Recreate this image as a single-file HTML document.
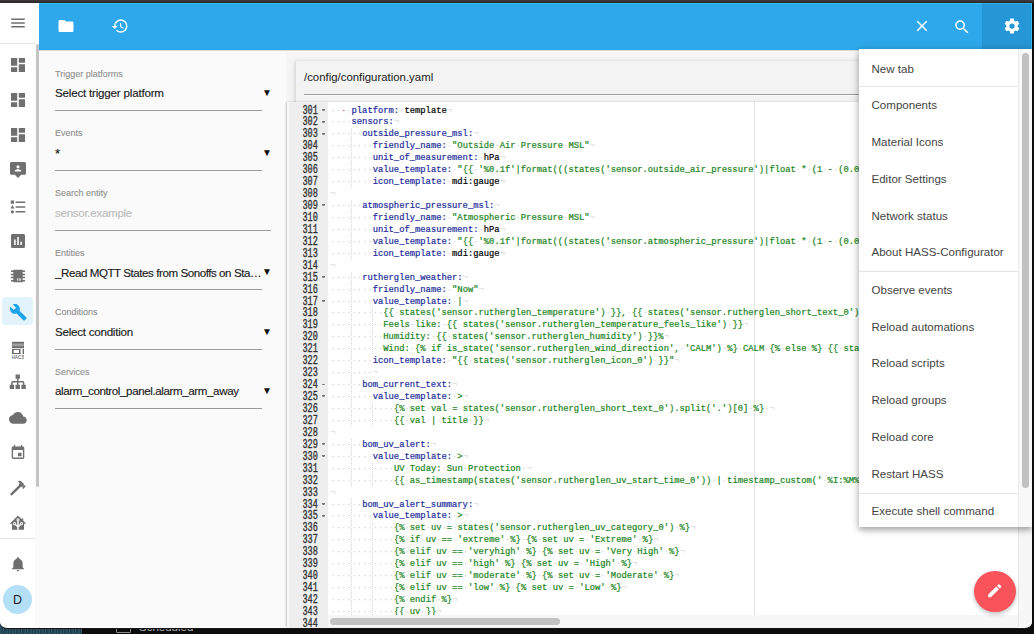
<!DOCTYPE html>
<html><head><meta charset="utf-8">
<style>
*{box-sizing:border-box;margin:0;padding:0}
html,body{width:1034px;height:634px;overflow:hidden;background:#0c0c0c;font-family:"Liberation Sans",sans-serif}
.abs{position:absolute}
#topstrip{position:absolute;left:0;top:0;width:1034px;height:3px;background:linear-gradient(#383c41,#3a2d2b 70%,#1e2226)}
#wall{position:absolute;left:0;top:618px;width:82px;height:16px;background:repeating-linear-gradient(90deg,#2a4d5e 0 2px,#1d3a49 2px 3px,#335868 3px 4px,#22404f 4px 6px)}
#sched{position:absolute;left:115.5px;top:621px;width:15px;height:12px;border:1px solid #8a8a8a;border-radius:1px}
#schedt{position:absolute;left:139px;top:620.5px;font-size:11.5px;color:#b0b0b0;white-space:nowrap}
#win{position:absolute;left:0;top:3px;width:1032px;height:625px;background:#fff;border-radius:0 0 7px 7px;overflow:hidden;box-shadow:0 1px 0 #161616}
#side{position:absolute;left:0;top:0;width:35px;height:624px;background:#fff}
#side svg{position:absolute;width:14px;height:14px;fill:#6f6f6f}
#sidesep{position:absolute;left:0;top:40px;width:35px;height:1px;background:#e3e3e3}
#sidesep2{position:absolute;left:0;top:535px;width:35px;height:1px;background:#e3e3e3}
#sscroll{position:absolute;left:35px;top:40px;width:4.5px;height:585px;background:#fbfbfb;border-right:1px solid #e2e2e2}
#sthumb{position:absolute;left:35.5px;top:41px;width:3.5px;height:443px;background:#c4c4c4;border-radius:2px}
#sel{position:absolute;left:2px;top:294px;width:31px;height:28px;background:#e3f3fc;border-radius:4px}
#avatar{position:absolute;left:3px;top:582px;width:29px;height:29px;border-radius:50%;background:#b3e0f7;color:#222;font-size:12.5px;text-align:center;line-height:30px}
#hdr{position:absolute;left:39px;top:0;width:993px;height:47px;background:#2ea8eb;border-top:1px solid #2cc4f8;border-bottom:1px solid #1eaaf6}
#hdrline{position:absolute;left:39px;top:47px;width:993px;height:1px;background:#e8d4c8}
#gearbg{position:absolute;left:982px;top:0;width:50px;height:47px;background:#2596d6;border-top:1px solid #2bb0ee;border-right:1px solid #35b5f0}
#hdr svg,#gearbg svg{position:absolute;width:18px;height:18px;fill:#fff}
#panel{position:absolute;left:39px;top:47px;width:247px;height:577px;background:#fafafa}
#main{position:absolute;left:286px;top:47px;width:746px;height:577px;background:#f6f6f6}
.lbl{position:absolute;left:16px;margin-top:-0.5px;font-size:9px;color:#8f8f8f;white-space:nowrap;-webkit-text-stroke:0.1px currentColor}
.selt{position:absolute;left:16px;margin-top:0.2px;font-size:11.6px;color:#1a1a1a;-webkit-text-stroke:0.15px currentColor;white-space:nowrap}
.uline{position:absolute;left:16px;height:1px;background:#9a9a9a}
.arr{position:absolute;left:223px;font-size:10px;color:#111}
#pathcard{position:absolute;left:296px;top:58px;width:736px;height:46px;background:#f3f3f3;box-shadow:-1px 0 3px rgba(0,0,0,.13),-4px 0 8px rgba(0,0,0,.04)}
#pathtxt{position:absolute;left:8px;top:10px;font-size:11.4px;color:#1a1a1a;white-space:nowrap}
#pathline{position:absolute;left:8px;top:33px;width:730px;height:2px;background:linear-gradient(#9b9b9b 0 50%,#fcfcfc 50% 100%)}
#editor{position:absolute;left:287px;top:99px;width:731px;height:525px;background:#fff;box-shadow:-1px 0 2px rgba(0,0,0,.2);overflow:hidden}
#gutter{position:absolute;left:0;top:0;width:41px;height:525px;background:linear-gradient(90deg,#f6f6f6 0 2px,#eeeeee 2px)}
#htrack{position:absolute;left:41px;top:513px;width:700px;height:12px;background:#f6f6f6}
.gn{position:absolute;left:0;width:31px;-webkit-text-stroke:0.25px #333;height:12px;text-align:right;font-family:"Liberation Mono",monospace;font-size:8.82px;line-height:12px;color:#333}
.gn span{display:inline-block;transform:translateY(1.4px) scale(0.97,1.36);transform-origin:100% 80%}
.fw{position:absolute;left:34.5px;top:4.4px;width:3.2px;height:1.8px;background:#777;border-radius:0 0 2px 2px}
#code{position:absolute;left:43.35px;top:0;width:700px;height:513px}
.ln{position:absolute;left:0;white-space:pre;-webkit-text-stroke:0.2px currentColor;font-family:"Liberation Mono",monospace;font-size:8.82px;line-height:12px;height:12px;color:#000}
.ln i{font-style:normal;color:#d0d0d0;-webkit-text-stroke:0}
.k{color:#1c2c9a}
.s{color:#1a8520}
.s i{color:#d0d0d0}
.v{color:#000}
.ls{color:#e2607a;-webkit-text-stroke:0}
u{position:absolute;width:1px;height:12px;background:repeating-linear-gradient(to bottom,#d8d8d8 0 1px,transparent 1px 2px)}
#pmargin{position:absolute;left:423.7px;top:0;width:1px;height:513px;background:#e3e3e3}
#hscroll{position:absolute;left:43px;top:516px;width:230px;height:7px;background:#c2c2c2;border-radius:4px}
#belowed{position:absolute;left:287px;top:612px;width:731px;height:12px;background:#f7f7f7}
#rstrip{position:absolute;left:1018px;top:47px;width:14px;height:577px;background:#f7f7f7;border-left:1px solid #e8e8e8}
#menu{position:absolute;left:859px;top:46px;width:173px;height:478px;background:#fff;box-shadow:0 3px 6px rgba(0,0,0,.3),0 1px 10px rgba(0,0,0,.12)}
.mi{position:absolute;left:12.5px;font-size:11.55px;color:#444;white-space:nowrap}
.msep{position:absolute;left:0;width:159px;height:1px;background:#e4e4e4}
#mtrack{position:absolute;left:159px;top:0;width:14px;height:478px;background:#f8f8f8;border-left:1px solid #ececec}
#mthumb{position:absolute;left:163px;top:4px;width:7px;height:435px;background:#c1c1c1;border-radius:3.5px}
#fab{position:absolute;left:974px;top:568px;width:41.5px;height:41px;border-radius:50%;background:#f8525a;box-shadow:0 2px 4px rgba(0,0,0,.25)}
#fab svg{position:absolute;left:12px;top:10.8px;width:17.5px;height:17.5px;fill:#fff}
</style></head><body>
<div id="topstrip"></div>
<div id="wall"></div>
<div id="sched"></div>
<div id="schedt">Scheduled</div>
<div id="win">
  <div id="side">
    <svg style="left:9px;top:10.5px;width:18px;height:18px" viewBox="0 0 24 24"><path d="M3,6H21V8H3V6M3,11H21V13H3V11M3,16H21V18H3V16Z"/></svg>
    <div id="sidesep"></div>
    <svg style="left:11px;top:55px;width:14px;height:14px" viewBox="3 3 18 18"><path d="M13,3V9H21V3M13,21H21V11H13M3,21H11V15H3M3,13H11V3H3V13Z"/></svg>
    <svg style="left:11px;top:90px" viewBox="3 3 18 18"><path d="M13,3V9H21V3M13,21H21V11H13M3,21H11V15H3M3,13H11V3H3V13Z"/></svg>
    <svg style="left:11px;top:125px" viewBox="3 3 18 18"><path d="M13,3V9H21V3M13,21H21V11H13M3,21H11V15H3M3,13H11V3H3V13Z"/></svg>
    <svg style="left:10px;top:159px;width:16px;height:16px" viewBox="2 2 20 20"><path d="M2,4C2,2.89 2.9,2 4,2H20A2,2 0 0,1 22,4V16A2,2 0 0,1 20,18H16L12,22L8,18H4A2,2 0 0,1 2,16V4M16,14V13C16,11.67 13.33,11 12,11C10.67,11 8,11.67 8,13V14H16M12,6A2,2 0 0,0 10,8A2,2 0 0,0 12,10A2,2 0 0,0 14,8A2,2 0 0,0 12,6Z"/></svg>
    <svg style="left:10px;top:196px;width:16px;height:16px" viewBox="2 2 20 20"><path d="M5,9.5L7.5,14H2.5L5,9.5M3,4H7V8H3V4M5,20A2,2 0 0,0 7,18A2,2 0 0,0 5,16A2,2 0 0,0 3,18A2,2 0 0,0 5,20M9,5V7H21V5H9M9,19H21V17H9V19M9,13H21V11H9V13Z"/></svg>
    <svg style="left:11px;top:231px" viewBox="3 3 18 18"><path d="M19,3H5C3.89,3 3,3.89 3,5V19A2,2 0 0,0 5,21H19A2,2 0 0,0 21,19V5C21,3.89 20.1,3 19,3M9,17H7V10H9V17M13,17H11V7H13V17M17,17H15V13H17V17Z"/></svg>
    <svg style="left:11px;top:266px" viewBox="3 3 18 18"><path d="M6,4H18V5H21V7H18V9H21V11H18V13H21V15H18V17H21V19H18V20H6V19H3V17H6V15H3V13H6V11H3V9H6V7H3V5H6V4M11,15V18H12V15H11M13,15V18H14V15H13M15,15V18H16V15H15Z"/></svg>
    <div id="sel"></div>
    <svg style="left:9.5px;top:300.5px;width:17px;height:17px;fill:#1ea4ea" viewBox="1 1 22.5 22.5"><path d="M22.7,19L13.6,9.9C14.5,7.6 14,4.9 12.1,3C10.1,1 7.1,0.6 4.7,1.7L9,6L6,9L1.6,4.7C0.4,7.1 0.9,10.1 2.9,12.1C4.8,14 7.5,14.5 9.8,13.6L18.9,22.7C19.3,23.1 19.9,23.1 20.3,22.7L22.6,20.4C23.1,20 23.1,19.3 22.7,19Z"/></svg>
    <svg style="left:12px;top:338px;width:12px;height:18px" viewBox="0 0 12 18"><rect x="0" y="0.8" width="12" height="6.4" fill="#6a6a6a"/><rect x="0.3" y="2.4" width="11.4" height="3" fill="#a0a0a0"/><rect x="0" y="8" width="1.6" height="5" fill="#6a6a6a"/><rect x="0" y="8" width="8.5" height="0.9" fill="#6a6a6a"/><rect x="0" y="12" width="8.5" height="1" fill="#6a6a6a"/><rect x="7" y="8" width="1.5" height="5" fill="#6a6a6a"/><rect x="10.6" y="8" width="1.4" height="5" fill="#6a6a6a"/><text x="6" y="17.6" font-size="4.6" text-anchor="middle" font-family="Liberation Sans" font-weight="bold" fill="#7a7a7a">HACS</text></svg>
    <svg style="left:9px;top:370.1px;width:17.5px;height:17.5px" viewBox="0 0 24 24"><path d="M9,2V8H11V11H5C3.89,11 3,11.89 3,13V16H1V22H7V16H5V13H11V16H9V22H15V16H13V13H19V16H17V22H23V16H21V13C21,11.89 20.11,11 19,11H13V8H15V2H9Z"/></svg>
    <svg style="left:9.3px;top:405.6px;width:17.7px;height:17.7px" viewBox="0 0 24 24"><path d="M19.35,10.03C18.67,6.59 15.64,4 12,4C9.11,4 6.6,5.64 5.35,8.03C2.34,8.36 0,10.9 0,14A6,6 0 0,0 6,20H19A5,5 0 0,0 24,15C24,12.36 21.95,10.22 19.35,10.03Z"/></svg>
    <svg style="left:11px;top:442px" viewBox="3 1 18 20"><path d="M19,19H5V8H19M16,1V3H8V1H6V3H5C3.89,3 3,3.89 3,5V19A2,2 0 0,0 5,21H19A2,2 0 0,0 21,19V5C21,3.89 20.1,3 19,3H18V1M17,12H12V17H17V12Z"/></svg>
    <svg style="left:10px;top:477px;width:16px;height:16px" viewBox="2 2 20 20"><path d="M2 19.63L13.43 8.2L12.72 7.5L14.14 6.07L12 3.89C13.2 2.7 15.09 2.7 16.27 3.89L19.87 7.5L18.45 8.91H21.29L22 9.62L18.45 13.21L17.74 12.5V9.62L16.27 11.04L15.56 10.33L4.13 21.76L2 19.63Z"/></svg>
    <svg style="left:9.4px;top:511.3px;width:18px;height:18px" viewBox="0 0 24 24"><path d="M21.8,13H20V21H13V17.67L15.79,14.88L16.5,15C17.66,15 18.6,14.06 18.6,12.9C18.6,11.74 17.66,10.8 16.5,10.8A2.1,2.1 0 0,0 14.4,12.9L14.5,13.61L13,15.13V9.650C13.66,9.29 14.1,8.6 14.1,7.8A2.1,2.1 0 0,0 12,5.7A2.1,2.1 0 0,0 9.9,7.8C9.9,8.6 10.34,9.29 11,9.65V15.13L9.5,13.61L9.6,12.9A2.1,2.1 0 0,0 7.5,10.8A2.1,2.1 0 0,0 5.4,12.9A2.1,2.1 0 0,0 7.5,15L8.21,14.88L11,17.67V21H4V13H2.25C1.83,13 1.42,13 1.42,12.79C1.43,12.57 1.85,12.15 2.28,11.72L11,3C11.33,2.67 11.67,2.33 12,2.33C12.33,2.33 12.67,2.67 13,3L17,7V6H19V9L21.78,11.78C22.18,12.18 22.59,12.59 22.6,12.8C22.6,13 22.2,13 21.8,13M7.5,12A0.9,0.9 0 0,1 8.4,12.9A0.9,0.9 0 0,1 7.5,13.8A0.9,0.9 0 0,1 6.6,12.9A0.9,0.9 0 0,1 7.5,12M16.5,12C17,12 17.4,12.4 17.4,12.9C17.4,13.4 17,13.8 16.5,13.8A0.9,0.9 0 0,1 15.6,12.9A0.9,0.9 0 0,1 16.5,12M12,6.9C12.5,6.9 12.9,7.3 12.9,7.8C12.9,8.3 12.5,8.7 12,8.7C11.5,8.7 11.1,8.3 11.1,7.8C11.1,7.3 11.5,6.9 12,6.9Z"/></svg>
    <div id="sidesep2"></div>
    <svg style="left:10px;top:553px;width:16px;height:16px" viewBox="0 0 24 24"><path d="M21,19V20H3V19L5,17V11C5,7.9 7.03,5.17 10,4.29C10,4.19 10,4.1 10,4A2,2 0 0,1 12,2A2,2 0 0,1 14,4C14,4.1 14,4.19 14,4.29C16.97,5.17 19,7.9 19,11V17L21,19M14,21A2,2 0 0,1 12,23A2,2 0 0,1 10,21"/></svg>
    <div id="avatar">D</div>
  </div>
  <div id="sscroll"></div>
  <div id="sthumb"></div>

  <div id="hdr">
    <svg style="left:17.5px;top:13px" viewBox="0 0 24 24"><path d="M10,4H4C2.89,4 2,4.89 2,6V18A2,2 0 0,0 4,20H20A2,2 0 0,0 22,18V8C22,6.89 21.1,6 20,6H12L10,4Z"/></svg>
    <svg style="left:72px;top:13px" viewBox="0 0 24 24"><path d="M13,3A9,9 0 0,0 4,12H1L4.89,15.89L4.96,16.03L9,12H6A7,7 0 0,1 13,5A7,7 0 0,1 20,12A7,7 0 0,1 13,19C11.07,19 9.32,18.21 8.06,16.94L6.64,18.36C8.27,20 10.5,21 13,21A9,9 0 0,0 22,12A9,9 0 0,0 13,3M12,8V13L16.28,15.54L17,14.33L13.5,12.25V8H12Z"/></svg>
    <svg style="left:874px;top:13px" viewBox="0 0 24 24"><path d="M19,6.41L17.59,5L12,10.59L6.41,5L5,6.41L10.59,12L5,17.59L6.41,19L12,13.41L17.59,19L19,17.59L13.41,12L19,6.41Z"/></svg>
    <svg style="left:913.5px;top:13.5px" viewBox="0 0 24 24"><path d="M15.5 14h-.79l-.28-.27A6.471 6.471 0 0 0 16 9.5 6.5 6.5 0 1 0 9.5 16c1.61 0 3.09-.59 4.23-1.57l.27.28v.79l5 4.99L20.49 19l-4.99-5zm-6 0C7.01 14 5 11.99 5 9.5S7.01 5 9.5 5 14 7.01 14 9.5 11.99 14 9.5 14z"/></svg>
  </div>
  <div id="gearbg">
    <svg style="left:21px;top:12.7px" viewBox="0 0 24 24"><path d="M12,15.5A3.5,3.5 0 0,1 8.5,12A3.5,3.5 0 0,1 12,8.5A3.5,3.5 0 0,1 15.5,12A3.5,3.5 0 0,1 12,15.5M19.43,12.97C19.47,12.65 19.5,12.33 19.5,12C19.5,11.67 19.47,11.34 19.43,11L21.54,9.37C21.73,9.22 21.78,8.95 21.66,8.73L19.66,5.27C19.54,5.05 19.27,4.96 19.050,5.05L16.56,6.05C16.04,5.66 15.5,5.32 14.87,5.07L14.5,2.42C14.46,2.18 14.25,2 14,2H10C9.75,2 9.54,2.18 9.5,2.42L9.13,5.07C8.5,5.32 7.96,5.66 7.44,6.05L4.95,5.05C4.730,4.96 4.46,5.05 4.34,5.27L2.34,8.73C2.21,8.95 2.27,9.22 2.46,9.37L4.57,11C4.53,11.34 4.5,11.67 4.5,12C4.5,12.33 4.53,12.65 4.57,12.97L2.46,14.63C2.27,14.78 2.21,15.05 2.34,15.27L4.34,18.73C4.46,18.95 4.73,19.03 4.95,18.95L7.44,17.94C7.96,18.34 8.5,18.68 9.13,18.93L9.5,21.58C9.54,21.82 9.75,22 10,22H14C14.25,22 14.46,21.82 14.5,21.58L14.87,18.93C15.5,18.67 16.04,18.34 16.56,17.94L19.05,18.95C19.27,19.03 19.54,18.95 19.66,18.73L21.66,15.27C21.78,15.05 21.73,14.78 21.54,14.63L19.43,12.97Z"/></svg>
  </div>

  <div id="main"></div>
  <div id="panel">
    <div class="lbl" style="top:19px">Trigger platforms</div>
    <div class="selt" style="top:36px;letter-spacing:-0.2px">Select trigger platform</div>
    <div class="arr" style="top:37px">▼</div>
    <div class="uline" style="top:60px;width:207px"></div>

    <div class="lbl" style="top:78px">Events</div>
    <div class="selt" style="top:96px;font-size:13px">*</div>
    <div class="arr" style="top:97px">▼</div>
    <div class="uline" style="top:120px;width:207px"></div>

    <div class="lbl" style="top:138px">Search entity</div>
    <div class="selt" style="top:156px;color:#bdbdbd;letter-spacing:-0.3px">sensor.example</div>
    <div class="uline" style="top:180px;width:216px"></div>

    <div class="lbl" style="top:198px">Entities</div>
    <div class="selt" style="top:215.5px;letter-spacing:-0.45px">_Read MQTT States from Sonoffs on Sta…</div>
    <div class="arr" style="top:216px">▼</div>
    <div class="uline" style="top:239px;width:207px"></div>

    <div class="lbl" style="top:257.5px">Conditions</div>
    <div class="selt" style="top:275px;letter-spacing:-0.25px">Select condition</div>
    <div class="arr" style="top:276px">▼</div>
    <div class="uline" style="top:299px;width:207px"></div>

    <div class="lbl" style="top:317.4px">Services</div>
    <div class="selt" style="top:334px;letter-spacing:-0.4px">alarm_control_panel.alarm_arm_away</div>
    <div class="arr" style="top:335px">▼</div>
    <div class="uline" style="top:358px;width:207px"></div>
  </div>

  <div id="pathcard">
    <div id="pathtxt">/config/configuration.yaml</div>
    <div id="pathline"></div>
  </div>
  <div id="rstrip"></div>
  <div id="belowed"></div>
  <div id="editor">
    <div id="gutter">
<div class="gn" style="top:2.50px"><span>301</span><b class="fw"></b></div>
<div class="gn" style="top:14.44px"><span>302</span><b class="fw"></b></div>
<div class="gn" style="top:26.38px"><span>303</span><b class="fw"></b></div>
<div class="gn" style="top:38.32px"><span>304</span></div>
<div class="gn" style="top:50.26px"><span>305</span></div>
<div class="gn" style="top:62.20px"><span>306</span></div>
<div class="gn" style="top:74.14px"><span>307</span></div>
<div class="gn" style="top:86.08px"><span>308</span></div>
<div class="gn" style="top:98.02px"><span>309</span><b class="fw"></b></div>
<div class="gn" style="top:109.96px"><span>310</span></div>
<div class="gn" style="top:121.90px"><span>311</span></div>
<div class="gn" style="top:133.84px"><span>312</span></div>
<div class="gn" style="top:145.78px"><span>313</span></div>
<div class="gn" style="top:157.72px"><span>314</span></div>
<div class="gn" style="top:169.66px"><span>315</span><b class="fw"></b></div>
<div class="gn" style="top:181.60px"><span>316</span></div>
<div class="gn" style="top:193.54px"><span>317</span><b class="fw"></b></div>
<div class="gn" style="top:205.48px"><span>318</span></div>
<div class="gn" style="top:217.42px"><span>319</span></div>
<div class="gn" style="top:229.36px"><span>320</span></div>
<div class="gn" style="top:241.30px"><span>321</span></div>
<div class="gn" style="top:253.24px"><span>322</span></div>
<div class="gn" style="top:265.18px"><span>323</span></div>
<div class="gn" style="top:277.12px"><span>324</span><b class="fw"></b></div>
<div class="gn" style="top:289.06px"><span>325</span><b class="fw"></b></div>
<div class="gn" style="top:301.00px"><span>326</span></div>
<div class="gn" style="top:312.94px"><span>327</span></div>
<div class="gn" style="top:324.88px"><span>328</span></div>
<div class="gn" style="top:336.82px"><span>329</span><b class="fw"></b></div>
<div class="gn" style="top:348.76px"><span>330</span><b class="fw"></b></div>
<div class="gn" style="top:360.70px"><span>331</span></div>
<div class="gn" style="top:372.64px"><span>332</span></div>
<div class="gn" style="top:384.58px"><span>333</span></div>
<div class="gn" style="top:396.52px"><span>334</span><b class="fw"></b></div>
<div class="gn" style="top:408.46px"><span>335</span><b class="fw"></b></div>
<div class="gn" style="top:420.40px"><span>336</span></div>
<div class="gn" style="top:432.34px"><span>337</span></div>
<div class="gn" style="top:444.28px"><span>338</span></div>
<div class="gn" style="top:456.22px"><span>339</span></div>
<div class="gn" style="top:468.16px"><span>340</span></div>
<div class="gn" style="top:480.10px"><span>341</span></div>
<div class="gn" style="top:492.04px"><span>342</span></div>
<div class="gn" style="top:503.98px"><span>343</span></div>
<div class="gn" style="top:515.92px"><span>344</span></div>
    </div>
    <div id="code">
      <div id="pmargin"></div>
<u style="left:20.46px;top:26.38px"></u><u style="left:20.46px;top:38.32px"></u><u style="left:20.46px;top:50.26px"></u><u style="left:20.46px;top:62.20px"></u><u style="left:20.46px;top:74.14px"></u><u style="left:20.46px;top:98.02px"></u><u style="left:20.46px;top:109.96px"></u><u style="left:20.46px;top:121.90px"></u><u style="left:20.46px;top:133.84px"></u><u style="left:20.46px;top:145.78px"></u><u style="left:20.46px;top:169.66px"></u><u style="left:20.46px;top:181.60px"></u><u style="left:20.46px;top:193.54px"></u><u style="left:20.46px;top:205.48px"></u><u style="left:41.62px;top:205.48px"></u><u style="left:20.46px;top:217.42px"></u><u style="left:41.62px;top:217.42px"></u><u style="left:20.46px;top:229.36px"></u><u style="left:41.62px;top:229.36px"></u><u style="left:20.46px;top:241.30px"></u><u style="left:41.62px;top:241.30px"></u><u style="left:20.46px;top:253.24px"></u><u style="left:20.46px;top:265.18px"></u><u style="left:20.46px;top:277.12px"></u><u style="left:20.46px;top:289.06px"></u><u style="left:20.46px;top:301.00px"></u><u style="left:41.62px;top:301.00px"></u><u style="left:20.46px;top:312.94px"></u><u style="left:41.62px;top:312.94px"></u><u style="left:20.46px;top:336.82px"></u><u style="left:20.46px;top:348.76px"></u><u style="left:20.46px;top:360.70px"></u><u style="left:41.62px;top:360.70px"></u><u style="left:20.46px;top:372.64px"></u><u style="left:41.62px;top:372.64px"></u><u style="left:20.46px;top:396.52px"></u><u style="left:20.46px;top:408.46px"></u><u style="left:20.46px;top:420.40px"></u><u style="left:41.62px;top:420.40px"></u><u style="left:20.46px;top:432.34px"></u><u style="left:41.62px;top:432.34px"></u><u style="left:20.46px;top:444.28px"></u><u style="left:41.62px;top:444.28px"></u><u style="left:20.46px;top:456.22px"></u><u style="left:41.62px;top:456.22px"></u><u style="left:20.46px;top:468.16px"></u><u style="left:41.62px;top:468.16px"></u><u style="left:20.46px;top:480.10px"></u><u style="left:41.62px;top:480.10px"></u><u style="left:20.46px;top:492.04px"></u><u style="left:41.62px;top:492.04px"></u><u style="left:20.46px;top:503.98px"></u><u style="left:41.62px;top:503.98px"></u>
<div class="ln" style="top:2.50px"><i>·</i><i>·</i><span class="ls">-</span><i>·</i><span class="k">platform:</span><i>·</i><span class="v">template</span><i>¬</i></div>
<div class="ln" style="top:14.44px"><i>·</i><i>·</i><i>·</i><i>·</i><span class="k">sensors:</span><i>¬</i></div>
<div class="ln" style="top:26.38px"><i>·</i><i>·</i><i>·</i><i>·</i><i>·</i><i>·</i><span class="k">outside_pressure_msl:</span><i>¬</i></div>
<div class="ln" style="top:38.32px"><i>·</i><i>·</i><i>·</i><i>·</i><i>·</i><i>·</i><i>·</i><i>·</i><span class="k">friendly_name:</span><i>·</i><span class="s">"Outside<i>·</i>Air<i>·</i>Pressure<i>·</i>MSL"</span><i>¬</i></div>
<div class="ln" style="top:50.26px"><i>·</i><i>·</i><i>·</i><i>·</i><i>·</i><i>·</i><i>·</i><i>·</i><span class="k">unit_of_measurement:</span><i>·</i><span class="v">hPa</span><i>¬</i></div>
<div class="ln" style="top:62.20px"><i>·</i><i>·</i><i>·</i><i>·</i><i>·</i><i>·</i><i>·</i><i>·</i><span class="k">value_template:</span><i>·</i><span class="s">"{{<i>·</i>'%0.1f'|format(((states('sensor.outside_air_pressure')|float<i>·</i>*<i>·</i>(1<i>·</i>-<i>·</i>(0.0065<i>·</i>*<i>·</i>100)<i>·</i>/<i>·</i>(states('sensor.outside_temperature')|float<i>·</i>+<i>·</i>(0.0065<i>·</i>*<i>·</i>100)<i>·</i>+<i>·</i>273.15))<i>·</i>**<i>·</i>-5.257)))<i>·</i>}}"</span><i>¬</i></div>
<div class="ln" style="top:74.14px"><i>·</i><i>·</i><i>·</i><i>·</i><i>·</i><i>·</i><i>·</i><i>·</i><span class="k">icon_template:</span><i>·</i><span class="v">mdi:gauge</span><i>¬</i></div>
<div class="ln" style="top:86.08px"><i>¬</i></div>
<div class="ln" style="top:98.02px"><i>·</i><i>·</i><i>·</i><i>·</i><i>·</i><i>·</i><span class="k">atmospheric_pressure_msl:</span><i>¬</i></div>
<div class="ln" style="top:109.96px"><i>·</i><i>·</i><i>·</i><i>·</i><i>·</i><i>·</i><i>·</i><i>·</i><span class="k">friendly_name:</span><i>·</i><span class="s">"Atmospheric<i>·</i>Pressure<i>·</i>MSL"</span><i>¬</i></div>
<div class="ln" style="top:121.90px"><i>·</i><i>·</i><i>·</i><i>·</i><i>·</i><i>·</i><i>·</i><i>·</i><span class="k">unit_of_measurement:</span><i>·</i><span class="v">hPa</span><i>¬</i></div>
<div class="ln" style="top:133.84px"><i>·</i><i>·</i><i>·</i><i>·</i><i>·</i><i>·</i><i>·</i><i>·</i><span class="k">value_template:</span><i>·</i><span class="s">"{{<i>·</i>'%0.1f'|format(((states('sensor.atmospheric_pressure')|float<i>·</i>*<i>·</i>(1<i>·</i>-<i>·</i>(0.0065<i>·</i>*<i>·</i>100)<i>·</i>/<i>·</i>(states('sensor.outside_temperature')|float<i>·</i>+<i>·</i>(0.0065<i>·</i>*<i>·</i>100)<i>·</i>+<i>·</i>273.15))<i>·</i>**<i>·</i>-5.257)))<i>·</i>}}"</span><i>¬</i></div>
<div class="ln" style="top:145.78px"><i>·</i><i>·</i><i>·</i><i>·</i><i>·</i><i>·</i><i>·</i><i>·</i><span class="k">icon_template:</span><i>·</i><span class="v">mdi:gauge</span><i>¬</i></div>
<div class="ln" style="top:157.72px"><i>¬</i></div>
<div class="ln" style="top:169.66px"><i>·</i><i>·</i><i>·</i><i>·</i><i>·</i><i>·</i><span class="k">rutherglen_weather:</span><i>¬</i></div>
<div class="ln" style="top:181.60px"><i>·</i><i>·</i><i>·</i><i>·</i><i>·</i><i>·</i><i>·</i><i>·</i><span class="k">friendly_name:</span><i>·</i><span class="s">"Now"</span><i>¬</i></div>
<div class="ln" style="top:193.54px"><i>·</i><i>·</i><i>·</i><i>·</i><i>·</i><i>·</i><i>·</i><i>·</i><span class="k">value_template:</span><i>·</i><span class="s">|</span><i>¬</i></div>
<div class="ln" style="top:205.48px"><i>·</i><i>·</i><i>·</i><i>·</i><i>·</i><i>·</i><i>·</i><i>·</i><i>·</i><i>·</i><span class="s">{{<i>·</i>states('sensor.rutherglen_temperature')<i>·</i>}},<i>·</i>{{<i>·</i>states('sensor.rutherglen_short_text_0')<i>·</i>}}</span><i>¬</i></div>
<div class="ln" style="top:217.42px"><i>·</i><i>·</i><i>·</i><i>·</i><i>·</i><i>·</i><i>·</i><i>·</i><i>·</i><i>·</i><span class="s">Feels<i>·</i>like:<i>·</i>{{<i>·</i>states('sensor.rutherglen_temperature_feels_like')<i>·</i>}}</span><i>¬</i></div>
<div class="ln" style="top:229.36px"><i>·</i><i>·</i><i>·</i><i>·</i><i>·</i><i>·</i><i>·</i><i>·</i><i>·</i><i>·</i><span class="s">Humidity:<i>·</i>{{<i>·</i>states('sensor.rutherglen_humidity')<i>·</i>}}%</span><i>¬</i></div>
<div class="ln" style="top:241.30px"><i>·</i><i>·</i><i>·</i><i>·</i><i>·</i><i>·</i><i>·</i><i>·</i><i>·</i><i>·</i><span class="s">Wind:<i>·</i>{%<i>·</i>if<i>·</i>is_state('sensor.rutherglen_wind_direction',<i>·</i>'CALM')<i>·</i>%}<i>·</i>CALM<i>·</i>{%<i>·</i>else<i>·</i>%}<i>·</i>{{<i>·</i>states('sensor.rutherglen_wind_direction')<i>·</i>}}</span><i>¬</i></div>
<div class="ln" style="top:253.24px"><i>·</i><i>·</i><i>·</i><i>·</i><i>·</i><i>·</i><i>·</i><i>·</i><span class="k">icon_template:</span><i>·</i><span class="s">"{{<i>·</i>states('sensor.rutherglen_icon_0')<i>·</i>}}"</span><i>¬</i></div>
<div class="ln" style="top:265.18px"><i>·</i><i>·</i><i>·</i><i>·</i><i>·</i><i>·</i><i>·</i><i>·</i><i>¬</i></div>
<div class="ln" style="top:277.12px"><i>·</i><i>·</i><i>·</i><i>·</i><i>·</i><i>·</i><span class="k">bom_current_text:</span><i>¬</i></div>
<div class="ln" style="top:289.06px"><i>·</i><i>·</i><i>·</i><i>·</i><i>·</i><i>·</i><i>·</i><i>·</i><span class="k">value_template:</span><i>·</i><span class="s">&gt;</span><i>¬</i></div>
<div class="ln" style="top:301.00px"><i>·</i><i>·</i><i>·</i><i>·</i><i>·</i><i>·</i><i>·</i><i>·</i><i>·</i><i>·</i><i>·</i><i>·</i><span class="s">{%<i>·</i>set<i>·</i>val<i>·</i>=<i>·</i>states('sensor.rutherglen_short_text_0').split('.')[0]<i>·</i>%}<i>·</i></span><i>¬</i></div>
<div class="ln" style="top:312.94px"><i>·</i><i>·</i><i>·</i><i>·</i><i>·</i><i>·</i><i>·</i><i>·</i><i>·</i><i>·</i><i>·</i><i>·</i><span class="s">{{<i>·</i>val<i>·</i>|<i>·</i>title<i>·</i>}}</span><i>¬</i></div>
<div class="ln" style="top:324.88px"><i>¬</i></div>
<div class="ln" style="top:336.82px"><i>·</i><i>·</i><i>·</i><i>·</i><i>·</i><i>·</i><span class="k">bom_uv_alert:</span><i>¬</i></div>
<div class="ln" style="top:348.76px"><i>·</i><i>·</i><i>·</i><i>·</i><i>·</i><i>·</i><i>·</i><i>·</i><span class="k">value_template:</span><i>·</i><span class="s">&gt;</span><i>¬</i></div>
<div class="ln" style="top:360.70px"><i>·</i><i>·</i><i>·</i><i>·</i><i>·</i><i>·</i><i>·</i><i>·</i><i>·</i><i>·</i><i>·</i><i>·</i><span class="s">UV<i>·</i>Today:<i>·</i>Sun<i>·</i>Protection<i>·</i></span><i>¬</i></div>
<div class="ln" style="top:372.64px"><i>·</i><i>·</i><i>·</i><i>·</i><i>·</i><i>·</i><i>·</i><i>·</i><i>·</i><i>·</i><i>·</i><i>·</i><span class="s">{{<i>·</i>as_timestamp(states('sensor.rutherglen_uv_start_time_0'))<i>·</i>|<i>·</i>timestamp_custom('<i>·</i>%I:%M%p')<i>·</i>}}</span><i>¬</i></div>
<div class="ln" style="top:384.58px"><i>¬</i></div>
<div class="ln" style="top:396.52px"><i>·</i><i>·</i><i>·</i><i>·</i><i>·</i><i>·</i><span class="k">bom_uv_alert_summary:</span><i>¬</i></div>
<div class="ln" style="top:408.46px"><i>·</i><i>·</i><i>·</i><i>·</i><i>·</i><i>·</i><i>·</i><i>·</i><span class="k">value_template:</span><i>·</i><span class="s">&gt;</span><i>¬</i></div>
<div class="ln" style="top:420.40px"><i>·</i><i>·</i><i>·</i><i>·</i><i>·</i><i>·</i><i>·</i><i>·</i><i>·</i><i>·</i><i>·</i><i>·</i><span class="s">{%<i>·</i>set<i>·</i>uv<i>·</i>=<i>·</i>states('sensor.rutherglen_uv_category_0')<i>·</i>%}</span><i>¬</i></div>
<div class="ln" style="top:432.34px"><i>·</i><i>·</i><i>·</i><i>·</i><i>·</i><i>·</i><i>·</i><i>·</i><i>·</i><i>·</i><i>·</i><i>·</i><span class="s">{%<i>·</i>if<i>·</i>uv<i>·</i>==<i>·</i>'extreme'<i>·</i>%}<i>·</i>{%<i>·</i>set<i>·</i>uv<i>·</i>=<i>·</i>'Extreme'<i>·</i>%}</span><i>¬</i></div>
<div class="ln" style="top:444.28px"><i>·</i><i>·</i><i>·</i><i>·</i><i>·</i><i>·</i><i>·</i><i>·</i><i>·</i><i>·</i><i>·</i><i>·</i><span class="s">{%<i>·</i>elif<i>·</i>uv<i>·</i>==<i>·</i>'veryhigh'<i>·</i>%}<i>·</i>{%<i>·</i>set<i>·</i>uv<i>·</i>=<i>·</i>'Very<i>·</i>High'<i>·</i>%}</span><i>¬</i></div>
<div class="ln" style="top:456.22px"><i>·</i><i>·</i><i>·</i><i>·</i><i>·</i><i>·</i><i>·</i><i>·</i><i>·</i><i>·</i><i>·</i><i>·</i><span class="s">{%<i>·</i>elif<i>·</i>uv<i>·</i>==<i>·</i>'high'<i>·</i>%}<i>·</i>{%<i>·</i>set<i>·</i>uv<i>·</i>=<i>·</i>'High'<i>·</i>%}</span><i>¬</i></div>
<div class="ln" style="top:468.16px"><i>·</i><i>·</i><i>·</i><i>·</i><i>·</i><i>·</i><i>·</i><i>·</i><i>·</i><i>·</i><i>·</i><i>·</i><span class="s">{%<i>·</i>elif<i>·</i>uv<i>·</i>==<i>·</i>'moderate'<i>·</i>%}<i>·</i>{%<i>·</i>set<i>·</i>uv<i>·</i>=<i>·</i>'Moderate'<i>·</i>%}</span><i>¬</i></div>
<div class="ln" style="top:480.10px"><i>·</i><i>·</i><i>·</i><i>·</i><i>·</i><i>·</i><i>·</i><i>·</i><i>·</i><i>·</i><i>·</i><i>·</i><span class="s">{%<i>·</i>elif<i>·</i>uv<i>·</i>==<i>·</i>'low'<i>·</i>%}<i>·</i>{%<i>·</i>set<i>·</i>uv<i>·</i>=<i>·</i>'Low'<i>·</i>%}</span><i>¬</i></div>
<div class="ln" style="top:492.04px"><i>·</i><i>·</i><i>·</i><i>·</i><i>·</i><i>·</i><i>·</i><i>·</i><i>·</i><i>·</i><i>·</i><i>·</i><span class="s">{%<i>·</i>endif<i>·</i>%}</span><i>¬</i></div>
<div class="ln" style="top:503.98px"><i>·</i><i>·</i><i>·</i><i>·</i><i>·</i><i>·</i><i>·</i><i>·</i><i>·</i><i>·</i><i>·</i><i>·</i><span class="s">{{<i>·</i>uv<i>·</i>}}</span><i>¬</i></div>
<div class="ln" style="top:515.92px"><i>¬</i></div>
    </div>
    <div id="htrack"></div><div id="hscroll"></div>
  </div>

  <div id="hdrline"></div>
  <div id="menu">
    <div class="mi" style="top:13.5px">New tab</div>
    <div class="msep" style="top:37px"></div>
    <div class="mi" style="top:50.1px">Components</div>
    <div class="mi" style="top:87.3px">Material Icons</div>
    <div class="mi" style="top:124.2px">Editor Settings</div>
    <div class="mi" style="top:160.5px">Network status</div>
    <div class="mi" style="top:197.3px">About HASS-Configurator</div>
    <div class="msep" style="top:222px"></div>
    <div class="mi" style="top:234.8px">Observe events</div>
    <div class="mi" style="top:271.5px">Reload automations</div>
    <div class="mi" style="top:308.3px">Reload scripts</div>
    <div class="mi" style="top:345.1px">Reload groups</div>
    <div class="mi" style="top:381.9px">Reload core</div>
    <div class="mi" style="top:418.7px">Restart HASS</div>
    <div class="msep" style="top:444px"></div>
    <div class="mi" style="top:456.3px">Execute shell command</div>
    <div id="mtrack"></div>
    <div id="mthumb"></div>
  </div>

  <div id="fab"><svg viewBox="0 0 24 24"><path d="M20.71,7.04C21.1,6.65 21.1,6 20.71,5.63L18.37,3.29C18,2.9 17.35,2.9 16.96,3.29L15.12,5.12L18.87,8.87M3,17.25V21H6.75L17.81,9.93L14.06,6.18L3,17.25Z"/></svg></div>
</div>
</body></html>
